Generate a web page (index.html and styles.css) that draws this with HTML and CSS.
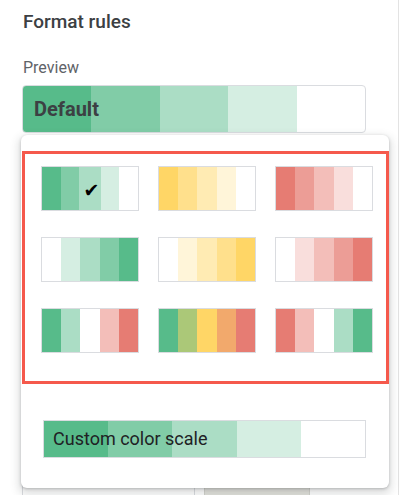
FILE: index.html
```html
<!DOCTYPE html>
<html lang="en">
<head>
<meta charset="UTF-8">
<meta name="viewport" content="width=device-width, initial-scale=1.0">
<title>Format rules</title>
<link rel="stylesheet" href="styles.css">
</head>
<body>

<div class="panel">
    <h2 class="title">Format rules</h2>
    <div class="label">Preview</div>
    <div class="preview scale-green">Default</div>
    <div class="behind">
        <div class="behind-field"></div>
        <div class="behind-button"></div>
    </div>
</div>

<div class="menu">
    <div class="presets">
        <div class="swatch">
            <span class="g1"></span><span class="g2"></span><span class="g3 checked">&#10004;</span><span class="g4"></span><span class="w"></span>
        </div>
        <div class="swatch">
            <span class="y1"></span><span class="y2"></span><span class="y3"></span><span class="y4"></span><span class="w"></span>
        </div>
        <div class="swatch">
            <span class="r1"></span><span class="r2"></span><span class="r3"></span><span class="r4"></span><span class="w"></span>
        </div>

        <div class="swatch">
            <span class="w"></span><span class="g4"></span><span class="g3"></span><span class="g2"></span><span class="g1"></span>
        </div>
        <div class="swatch">
            <span class="w"></span><span class="y4"></span><span class="y3"></span><span class="y2"></span><span class="y1"></span>
        </div>
        <div class="swatch">
            <span class="w"></span><span class="r4"></span><span class="r3"></span><span class="r2"></span><span class="r1"></span>
        </div>

        <div class="swatch">
            <span class="g1"></span><span class="g3"></span><span class="w"></span><span class="r3"></span><span class="r1"></span>
        </div>
        <div class="swatch">
            <span class="g1"></span><span class="lime"></span><span class="y1"></span><span class="orange"></span><span class="r1"></span>
        </div>
        <div class="swatch">
            <span class="r1"></span><span class="r3"></span><span class="w"></span><span class="g3"></span><span class="g1"></span>
        </div>
    </div>

    <div class="custom scale-green">Custom color scale</div>
</div>

</body>
</html>
```

FILE: styles.css
```css
body {
    font-family: Roboto, "Liberation Sans", Arial, sans-serif;
    margin: 0;
    padding: 0;
    background: #fff;
}
.panel {
    position: relative;
    width: 376px;
    height: 495px;
    padding: 0 0 0 22px;
    border-right: 1px solid #e3e3e3;
    overflow: hidden;
}
.title {
    margin: 10px 0 0 1px;
    font-size: 19px;
    line-height: 24px;
    font-weight: 500;
    color: #3c4043;
}
.label {
    margin: 24px 0 0 1px;
    font-size: 16px;
    line-height: 20px;
    color: #5f6368;
}

/* green scale bar used by preview + custom button */
.scale-green {
    background: linear-gradient(to right,
        #57bb8a 0 20%, #81cca7 20% 40%, #abddc5 40% 60%,
        #d5eee2 60% 80%, #fff 80% 100%);
}
.preview {
    margin-top: 7px;
    width: 344px;
    height: 48px;
    box-sizing: border-box;
    border: 1px solid #dadce0;
    border-radius: 4px;
    padding-left: 11px;
    font-size: 20px;
    line-height: 46px;
    font-weight: 700;
    color: #3c4043;
}
.behind {
    display: flex;
    gap: 9px;
    margin-top: 326px;
}
.behind-field {
    width: 171px;
    height: 50px;
    border: 1px solid #dadce0;
    border-radius: 4px;
}
.behind-button {
    width: 104px;
    height: 50px;
    background: #e2e2dc;
    border: 1px solid #d2d2cc;
}

/* dropdown */
.menu {
    position: absolute;
    top: 135px;
    left: 21px;
    width: 368px;
    height: 353px;
    box-sizing: border-box;
    padding-top: 16px;
    background: #fff;
    border-radius: 6px;
    box-shadow: 0 1px 3px rgba(60, 64, 67, 0.3), 0 4px 8px 3px rgba(60, 64, 67, 0.15);
}
.presets {
    display: grid;
    grid-template-columns: repeat(3, 98px);
    column-gap: 19px;
    row-gap: 26px;
    margin-left: 1px;
    padding: 12px 13px 28px 16px;
    border: 3px solid #f5594c;
}
.swatch {
    display: flex;
    height: 45px;
    box-sizing: border-box;
    border: 1px solid #dadce0;
}
.swatch span {
    flex: 1;
    display: flex;
    align-items: center;
    justify-content: center;
}
.checked {
    font-family: "DejaVu Sans", sans-serif;
    font-size: 19px;
    color: #000;
    padding: 2px 0 0 3px;
}
.g1 { background: #57bb8a; }
.g2 { background: #81cca7; }
.g3 { background: #abddc5; }
.g4 { background: #d5eee2; }
.y1 { background: #ffd666; }
.y2 { background: #ffe08c; }
.y3 { background: #ffebb3; }
.y4 { background: #fff5d9; }
.r1 { background: #e67c73; }
.r2 { background: #ec9d96; }
.r3 { background: #f3beb9; }
.r4 { background: #f9dedc; }
.w { background: #fff; }
.lime { background: #abc878; }
.orange { background: #f2a96c; }

.custom {
    margin: 36px 0 0 22px;
    width: 323px;
    height: 38px;
    box-sizing: border-box;
    border: 1px solid #dadce0;
    padding-left: 9px;
    font-size: 18px;
    line-height: 36px;
    color: #202124;
}
```
